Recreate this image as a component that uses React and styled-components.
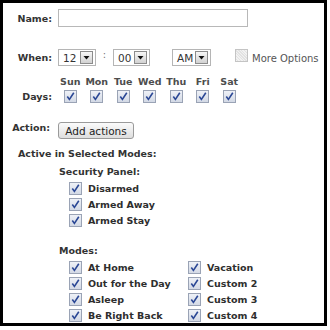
import React from "react";
import styled, { createGlobalStyle } from "styled-components";

const Global = createGlobalStyle`
  html, body { margin: 0; padding: 0; background: #fff; }
  body { font-family: "DejaVu Sans", Verdana, sans-serif; }
`;

const Frame = styled.div`
  box-sizing: border-box;
  width: 327px;
  height: 326px;
  border: 3px solid #000;
  background: #fff;
  overflow: hidden;
  display: flex;
  flex-direction: column;
`;

const FormRow = styled.div`
  display: grid;
  grid-template-columns: 49px auto;
  column-gap: ${(p) => p.$gap || 6}px;
  align-items: ${(p) => p.$align || "center"};
  margin-top: ${(p) => p.$mt || 0}px;
`;

const Label = styled.div`
  text-align: right;
  font-weight: bold;
  font-size: 9.5px;
  color: #333;
  padding-right: ${(p) => p.$pr || 0}px;
  padding-top: ${(p) => p.$pt || 0}px;
`;

const TextInput = styled.div`
  box-sizing: border-box;
  width: 190px;
  height: 18px;
  border: 1px solid #b8b8b8;
  background: #fff;
`;

const Controls = styled.div`
  display: flex;
  align-items: center;
`;

const SelectBox = styled.div`
  box-sizing: border-box;
  width: ${(p) => p.$w}px;
  height: 17px;
  border: 1px solid #b5b5b5;
  background: #fff;
  display: flex;
  align-items: center;
  justify-content: space-between;
  padding: 0 2px 0 4px;
  margin-left: ${(p) => p.$ml || 0}px;
  font-size: 10.5px;
  color: #333;
`;

const ArrowBtn = styled.span`
  box-sizing: border-box;
  width: 13px;
  height: 13px;
  border: 1px solid #8c8c8c;
  background: linear-gradient(#f7f7f7, #d2d2d2);
  display: flex;
  align-items: center;
  justify-content: center;
`;

const Colon = styled.span`
  width: 17px;
  text-align: center;
  font-size: 10px;
  color: #777;
  margin-top: -6px;
`;

const MoreOptions = styled.div`
  display: flex;
  align-items: flex-start;
  margin-left: 24px;
  margin-top: -2px;
  gap: 4px;
`;

const MoreText = styled.span`
  font-size: 10px;
  color: #555;
  margin-top: 4px;
`;

const Box = styled.span`
  box-sizing: border-box;
  display: inline-flex;
  align-items: center;
  justify-content: center;
  flex: none;
  width: 13px;
  height: 13px;
  border: 1px solid ${(p) => (p.$disabled ? "#c4c4c4" : "#9aa3b5")};
  background: ${(p) =>
    p.$disabled
      ? "repeating-linear-gradient(45deg, #f2f2f2 0 1px, #e2e2e2 1px 2px)"
      : "linear-gradient(#eef1f7, #d3d9e5)"};
`;

const Check = ({ disabled }) => (
  <Box $disabled={disabled}>
    {!disabled && (
      <svg width="11" height="11" viewBox="0 0 11 11">
        <path d="M2.3 5.6 L4.4 8.4 L8.8 1.8" fill="none" stroke="#2a4795" strokeWidth="1.6" />
      </svg>
    )}
  </Box>
);

const DayGrid = styled.div`
  display: grid;
  grid-template-columns: repeat(7, 26.5px);
  margin-left: -1px;
  justify-items: center;
`;

const DayName = styled.div`
  font-weight: bold;
  font-size: 9.5px;
  color: #4d4d4d;
  height: 12px;
  line-height: 12px;
`;

const Separator = styled.div`
  margin-top: 9px;
  height: 2px;
  width: 318px;
  background: linear-gradient(90deg, #b4b4b4 0%, #c0c0c0 95%, #eee 100%);
  box-shadow: 0 1px 1px #e0e0e0;
`;

const Button = styled.div`
  box-sizing: border-box;
  width: 76px;
  height: 17px;
  border: 1px solid #9a9a9a;
  border-radius: 3px;
  background: linear-gradient(#fbfbfb, #dedede);
  font-size: 10.5px;
  color: #222;
  display: flex;
  align-items: center;
  justify-content: center;
`;

const Heading = styled.div`
  font-weight: bold;
  font-size: 9.5px;
  color: #333;
  line-height: 16px;
  height: 16px;
  margin-left: ${(p) => p.$ml}px;
  margin-top: ${(p) => p.$mt || 0}px;
`;

const OptionList = styled.div`
  display: grid;
  grid-template-columns: ${(p) => (p.$cols === 2 ? "119px auto" : "auto")};
  grid-auto-flow: column;
  grid-template-rows: ${(p) => `repeat(${p.$rows}, 16px)`};
  margin-left: 66px;
`;

const Option = styled.div`
  display: flex;
  align-items: center;
  gap: 6px;
  font-weight: bold;
  font-size: 9.5px;
  color: #2e2e2e;
  white-space: nowrap;
`;

const Select = ({ value, w, ml }) => (
  <SelectBox $w={w} $ml={ml}>
    <span>{value}</span>
    <ArrowBtn>
      <svg width="7" height="5" viewBox="0 0 7 5">
        <path d="M0.5 1 H6.5 L3.5 4.5 Z" fill="#111" />
      </svg>
    </ArrowBtn>
  </SelectBox>
);

const days = ["Sun", "Mon", "Tue", "Wed", "Thu", "Fri", "Sat"];
const security = ["Disarmed", "Armed Away", "Armed Stay"];
const modes = ["At Home", "Out for the Day", "Asleep", "Be Right Back", "Vacation", "Custom 2", "Custom 3", "Custom 4"];

export default function App() {
  return (
    <>
      <Global />
      <Frame>
        <FormRow $mt={6}>
          <Label>Name:</Label>
          <TextInput />
        </FormRow>

        <FormRow $mt={22}>
          <Label>When:</Label>
          <Controls>
            <Select value="12" w={38} />
            <Colon>:</Colon>
            <Select value="00" w={37} />
            <Select value="AM" w={39} ml={22} />
            <MoreOptions>
              <Check disabled />
              <MoreText>More Options</MoreText>
            </MoreOptions>
          </Controls>
        </FormRow>

        <FormRow $mt={10}>
          <span />
          <DayGrid>
            {days.map((d) => (
              <DayName key={d}>{d}</DayName>
            ))}
          </DayGrid>
        </FormRow>
        <FormRow $mt={2}>
          <Label>Days:</Label>
          <DayGrid>
            {days.map((d) => (
              <Check key={d} />
            ))}
          </DayGrid>
        </FormRow>

        <Separator />

        <FormRow $mt={10} $align="start">
          <Label $pr={2} $pt={0}>Action:</Label>
          <Button>Add actions</Button>
        </FormRow>

        <Heading $ml={15} $mt={7}>Active in Selected Modes:</Heading>
        <Heading $ml={56} $mt={2}>Security Panel:</Heading>
        <OptionList $rows={3}>
          {security.map((s) => (
            <Option key={s}>
              <Check />
              {s}
            </Option>
          ))}
        </OptionList>

        <Heading $ml={56} $mt={15}>Modes:</Heading>
        <OptionList $rows={4} $cols={2}>
          {modes.map((s) => (
            <Option key={s}>
              <Check />
              {s}
            </Option>
          ))}
        </OptionList>
      </Frame>
    </>
  );
}
